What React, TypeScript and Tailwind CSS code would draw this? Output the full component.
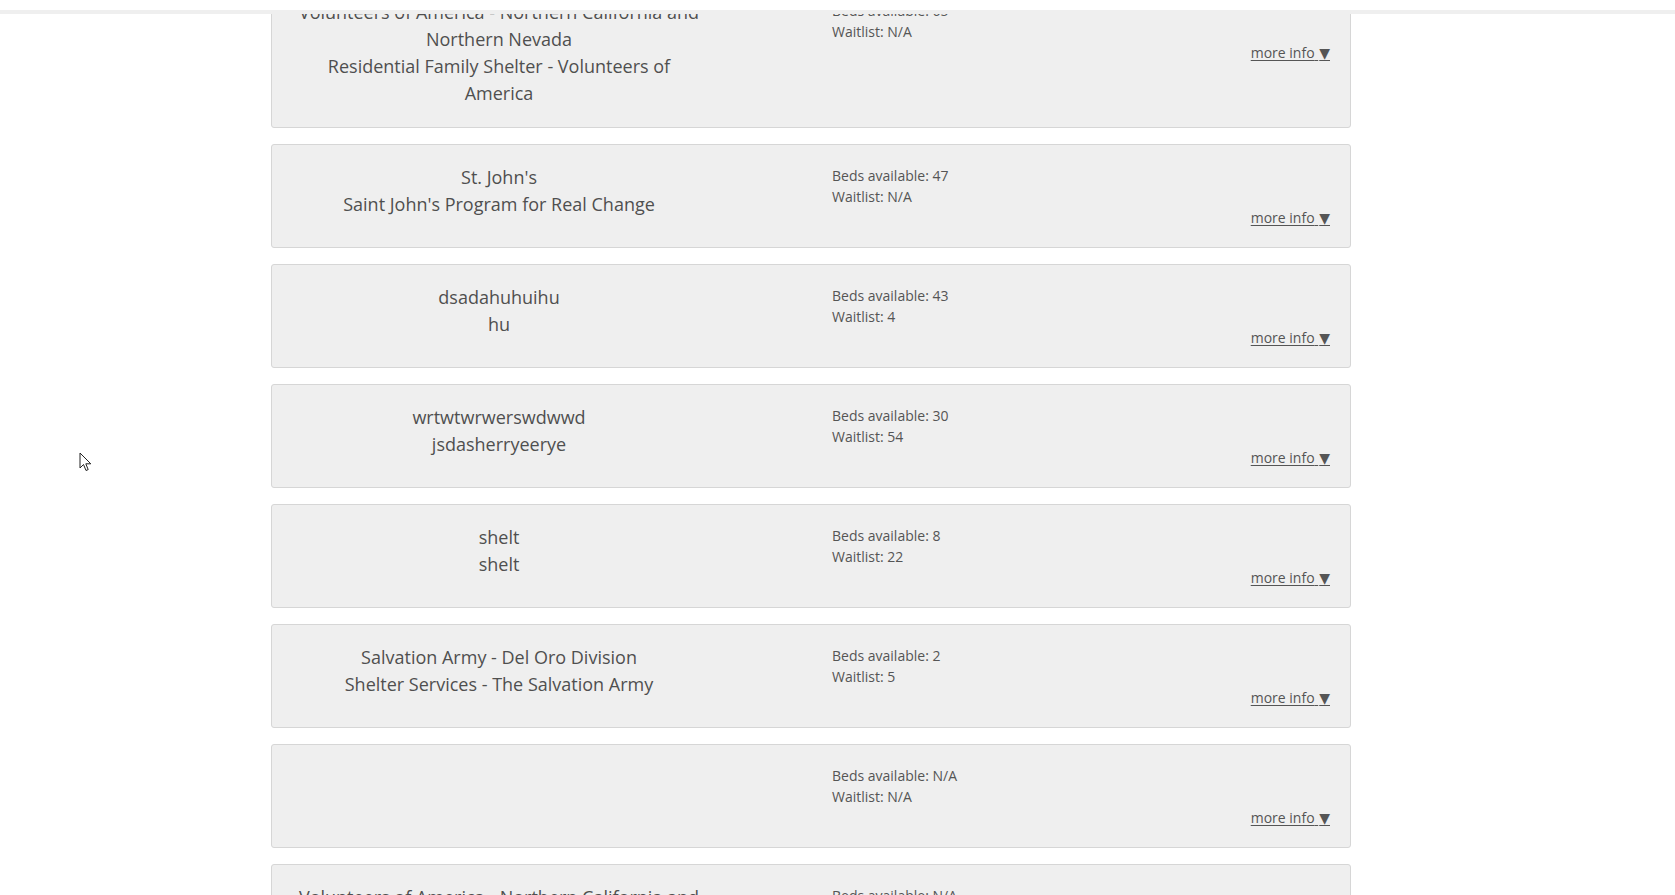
import React from "react";

type Shelter = {
  id: number;
  lines: string[];
  beds: string;
  waitlist: string;
};

const SHELTERS: Shelter[] = [
  {
    id: 1,
    lines: [
      "Volunteers of America - Northern California and Northern Nevada",
      "Residential Family Shelter - Volunteers of America",
    ],
    beds: "65",
    waitlist: "N/A",
  },
  { id: 2, lines: ["St. John's", "Saint John's Program for Real Change"], beds: "47", waitlist: "N/A" },
  { id: 3, lines: ["dsadahuhuihu", "hu"], beds: "43", waitlist: "4" },
  { id: 4, lines: ["wrtwtwrwerswdwwd", "jsdasherryeerye"], beds: "30", waitlist: "54" },
  { id: 5, lines: ["shelt", "shelt"], beds: "8", waitlist: "22" },
  {
    id: 6,
    lines: ["Salvation Army - Del Oro Division", "Shelter Services - The Salvation Army"],
    beds: "2",
    waitlist: "5",
  },
  { id: 7, lines: [], beds: "N/A", waitlist: "N/A" },
  {
    id: 8,
    lines: [
      "Volunteers of America - Northern California and Northern Nevada",
      "Residential Family Shelter - Volunteers of America",
    ],
    beds: "N/A",
    waitlist: "N/A",
  },
];

function ShelterCard({ shelter }: { shelter: Shelter }) {
  return (
    <div className="flex rounded-[3px] border border-[#d6d6d6] bg-[#efefef] pb-[20px] pt-[19px] pl-[23px] pr-[20px]">
      {/* nome do abrigo */}
      <div className="w-[408px] shrink-0 text-center text-[18px] leading-[27px] text-[#4f4f4f]">
        {shelter.lines.map((line, i) => (
          <div key={i}>{line}</div>
        ))}
      </div>

      {/* vagas + link */}
      <div className="ml-[129px] flex flex-1 flex-col pt-[1px] text-[14px] leading-[21px] text-[#555]">
        <div>Beds available: {shelter.beds}</div>
        <div>Waitlist: {shelter.waitlist}</div>
        <div className="flex h-[20px] justify-end">
          <a href="#" className="text-[#555] underline underline-offset-[2px]">
            more info{" "}
            <span className="ml-[1px] font-['DejaVu_Sans'] text-[14px] leading-none">▼</span>
          </a>
        </div>
      </div>
    </div>
  );
}

export default function App() {
  return (
    <div className="relative min-h-screen overflow-hidden bg-white font-['Open_Sans',sans-serif]">
      {/* barra fixa do topo */}
      <div className="fixed inset-x-0 top-0 z-10 h-[14px] border-b-4 border-[#efefef] bg-white" />

      <main className="ml-[271px] mt-[-21px] flex w-[1080px] flex-col gap-4">
        {SHELTERS.map((s) => (
          <ShelterCard key={s.id} shelter={s} />
        ))}
      </main>

      {/* cursor do mouse */}
      <svg
        className="absolute left-[79px] top-[452px]"
        width="14"
        height="21"
        viewBox="0 0 14 21"
      >
        <path
          d="M1 1 L1 16 L4.5 12.5 L7 18.5 L9.2 17.6 L6.8 11.8 L11.8 11.8 Z"
          fill="#fff"
          stroke="#222"
          strokeWidth="1"
          strokeLinejoin="round"
        />
      </svg>
    </div>
  );
}
